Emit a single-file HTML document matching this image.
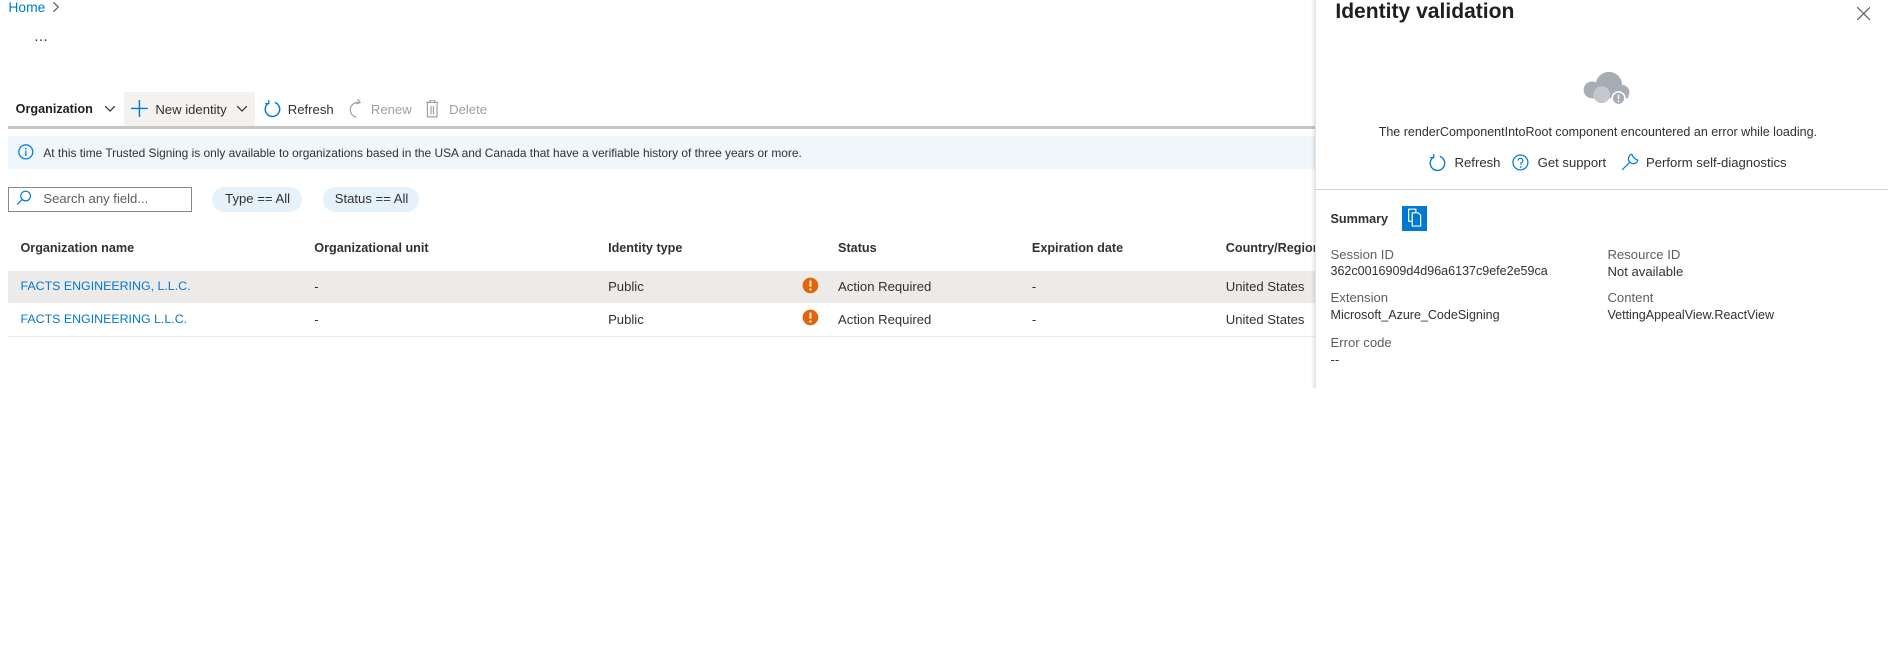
<!DOCTYPE html>
<html><head><meta charset="utf-8"><style>
html,body{margin:0;padding:0;background:#fff;overflow:hidden}
body{width:1888px;height:648px}
#z{zoom:1.2041;width:1568px;height:538px;position:relative;font-family:"Liberation Sans",sans-serif;font-size:10.9px;color:#323130}
.a{position:absolute;white-space:nowrap}
.blue{color:#0078d4}
.gray{color:#a19f9d}
.hd{font-weight:bold;font-size:10.5px}
svg{position:absolute}
</style></head><body><div id="z">
<div class="a blue" style="left:7px;top:-1px;font-size:11.5px">Home</div>
<svg style="left:42px;top:1px" width="8" height="10"><path d="M2 1l4 4-4 4" fill="none" stroke="#605e5c" stroke-width="1"/></svg>
<div class="a" style="left:28px;top:24px;font-size:12px">…</div>

<div class="a" style="left:103px;top:76px;width:109px;height:29px;background:#f3f2f1"></div>
<div class="a" style="left:7px;top:105px;width:1085px;height:2px;background:#c8c6c4"></div>
<div class="a hd" style="left:13px;top:85px;color:#201f1e">Organization</div>
<svg style="left:86px;top:87px" width="10" height="7"><path d="M1 1l4 4 4-4" fill="none" stroke="#323130"/></svg>
<svg style="left:109px;top:83px" width="14" height="14"><path d="M7 0v14M0 7h14" stroke="#0078d4" stroke-width="1.2"/></svg>
<div class="a" style="left:129px;top:85px">New identity</div>
<svg style="left:196px;top:87px" width="10" height="7"><path d="M1 1l4 4 4-4" fill="none" stroke="#323130"/></svg>
<svg style="left:219px;top:83px" width="14" height="15"><path d="M4 2.5A6 6 0 1 0 9 2" fill="none" stroke="#0078d4" stroke-width="1.2"/><path d="M4 0v3H1" fill="none" stroke="#0078d4"/></svg>
<div class="a" style="left:239px;top:85px">Refresh</div>
<svg style="left:289px;top:82px" width="12" height="16"><path d="M9 3A6 6 0 1 0 7 15" fill="none" stroke="#a19f9d"/><path d="M8 0l2 3-3 1" fill="none" stroke="#a19f9d"/></svg>
<div class="a gray" style="left:308px;top:85px">Renew</div>
<svg style="left:353px;top:83px" width="12" height="15"><path d="M1 2h10M4 2V0h4v2M2 2v12h8V2M5 5v7M7 5v7" fill="none" stroke="#a19f9d"/></svg>
<div class="a gray" style="left:373px;top:85px">Delete</div>

<div class="a" style="left:7px;top:113px;width:1085px;height:27px;background:#eff6fc"></div>
<svg style="left:15px;top:120px" width="13" height="13"><circle cx="6.5" cy="6.5" r="5.8" fill="none" stroke="#0078d4"/><path d="M6.5 5.5v4.5" stroke="#0078d4"/><circle cx="6.5" cy="3.8" r=".7" fill="#0078d4"/></svg>
<div class="a" style="left:36px;top:121px;font-size:9.9px">At this time Trusted Signing is only available to organizations based in the USA and Canada that have a verifiable history of three years or more.</div>

<div class="a" style="left:7px;top:155px;width:151px;height:19px;border:1px solid #8a8886"></div>
<svg style="left:13px;top:158px" width="13" height="13"><circle cx="8" cy="5" r="4" fill="none" stroke="#0078d4"/><path d="M5 8l-4 4" stroke="#0078d4"/></svg>
<div class="a" style="left:36px;top:159px;color:#605e5c">Search any field...</div>
<div class="a" style="left:176px;top:155px;width:75px;height:21px;border-radius:11px;background:#e6f2fb"></div>
<div class="a" style="left:187px;top:159px">Type == All</div>
<div class="a" style="left:268px;top:155px;width:80px;height:21px;border-radius:11px;background:#e6f2fb"></div>
<div class="a" style="left:278px;top:159px">Status == All</div>

<div class="a hd" style="left:17px;top:200px">Organization name</div>
<div class="a hd" style="left:261px;top:200px">Organizational unit</div>
<div class="a hd" style="left:505px;top:200px">Identity type</div>
<div class="a hd" style="left:696px;top:200px">Status</div>
<div class="a hd" style="left:857px;top:200px">Expiration date</div>
<div class="a hd" style="left:1018px;top:200px">Country/Region</div>
<div class="a" style="left:7px;top:225px;width:1085px;height:27px;background:#edebe9"></div>
<div class="a" style="left:7px;top:279px;width:1085px;height:1px;background:#edebe9"></div>
<div class="a blue" style="left:17px;top:232px;font-size:10.3px">FACTS ENGINEERING, L.L.C.</div>
<div class="a blue" style="left:17px;top:259px;font-size:10.3px">FACTS ENGINEERING L.L.C.</div>
<div class="a" style="left:261px;top:232px">-</div><div class="a" style="left:261px;top:259px">-</div>
<div class="a" style="left:505px;top:232px">Public</div><div class="a" style="left:505px;top:259px">Public</div>
<svg style="left:666px;top:230px" width="14" height="14"><circle cx="7" cy="7" r="6.5" fill="#e5640b"/><path d="M7 3v5" stroke="#fff" stroke-width="1.6"/><circle cx="7" cy="10.3" r="1" fill="#fff"/></svg>
<svg style="left:666px;top:257px" width="14" height="14"><circle cx="7" cy="7" r="6.5" fill="#e5640b"/><path d="M7 3v5" stroke="#fff" stroke-width="1.6"/><circle cx="7" cy="10.3" r="1" fill="#fff"/></svg>
<div class="a" style="left:696px;top:232px">Action Required</div><div class="a" style="left:696px;top:259px">Action Required</div>
<div class="a" style="left:857px;top:232px">-</div><div class="a" style="left:857px;top:259px">-</div>
<div class="a" style="left:1018px;top:232px">United States</div><div class="a" style="left:1018px;top:259px">United States</div>

<div class="a" style="left:1092px;top:0;width:476px;height:538px;background:#fff"></div>
<div class="a" style="left:1089px;top:0;width:4px;height:322px;background:linear-gradient(90deg,rgba(0,0,0,0),rgba(0,0,0,.12))"></div>
<div class="a" style="left:1109px;top:0px;font-size:17.5px;font-weight:bold;color:#201f1e">Identity validation</div>
<svg style="left:1542px;top:6px" width="11" height="11"><path d="M0 0l11 11M11 0L0 11" stroke="#605e5c"/></svg>
<svg style="left:1312px;top:56px" width="46" height="36"><circle cx="10" cy="19" r="7" fill="#a7adb5"/><circle cx="24" cy="15" r="11" fill="#a7adb5"/><circle cx="35" cy="21" r="6" fill="#a7adb5"/><rect x="10" y="18" width="30" height="8" fill="#a7adb5"/><circle cx="18" cy="23" r="7" fill="#c4c8ce"/><circle cx="32" cy="26" r="6" fill="#fff"/><circle cx="32" cy="26" r="4.6" fill="#a7adb5"/><path d="M32 23v3.5" stroke="#fff" stroke-width="1.2"/><circle cx="32" cy="28.3" r=".7" fill="#fff"/></svg>
<div class="a" style="left:1145px;top:104px;font-size:10.4px">The renderComponentIntoRoot component encountered an error while loading.</div>
<svg style="left:1187px;top:128px" width="14" height="15"><path d="M4 2.5A6 6 0 1 0 9 2" fill="none" stroke="#0078d4" stroke-width="1.1"/><path d="M4 0v3H1" fill="none" stroke="#0078d4"/></svg>
<div class="a" style="left:1208px;top:129px">Refresh</div>
<svg style="left:1256px;top:128px" width="14" height="14"><circle cx="7" cy="7" r="6.2" fill="none" stroke="#0078d4"/><path d="M5 5.5a2 2 0 1 1 2.5 2V9" fill="none" stroke="#0078d4"/><circle cx="7.3" cy="10.8" r=".7" fill="#0078d4"/></svg>
<div class="a" style="left:1277px;top:129px">Get support</div>
<svg style="left:1346px;top:127px" width="15" height="15"><path d="M1 14l6-6M9 1a4 4 0 1 0 5 5l-2-1-2-2z" fill="none" stroke="#0078d4"/></svg>
<div class="a" style="left:1367px;top:129px">Perform self-diagnostics</div>
<div class="a" style="left:1092px;top:157px;width:476px;height:1px;background:#d2d0ce"></div>
<div class="a hd" style="left:1105px;top:176px">Summary</div>
<div class="a" style="left:1164px;top:171px;width:21px;height:21px;background:#0078d4"></div>
<svg style="left:1167px;top:173px" width="16" height="17"><rect x="3" y="1" width="6" height="10" fill="none" stroke="#fff"/><path d="M6 4h5l2 2v9H6z" fill="#0078d4" stroke="#fff"/></svg>
<div class="a" style="left:1105px;top:205px;color:#605e5c">Session ID</div>
<div class="a" style="left:1105px;top:219px;font-size:10.4px">362c0016909d4d96a6137c9efe2e59ca</div>
<div class="a" style="left:1335px;top:205px;color:#605e5c">Resource ID</div>
<div class="a" style="left:1335px;top:219px">Not available</div>
<div class="a" style="left:1105px;top:241px;color:#605e5c">Extension</div>
<div class="a" style="left:1105px;top:256px;font-size:10.4px">Microsoft_Azure_CodeSigning</div>
<div class="a" style="left:1335px;top:241px;color:#605e5c">Content</div>
<div class="a" style="left:1335px;top:256px;font-size:10.4px">VettingAppealView.ReactView</div>
<div class="a" style="left:1105px;top:278px;color:#605e5c">Error code</div>
<div class="a" style="left:1105px;top:292px">--</div>
</div></body></html>
